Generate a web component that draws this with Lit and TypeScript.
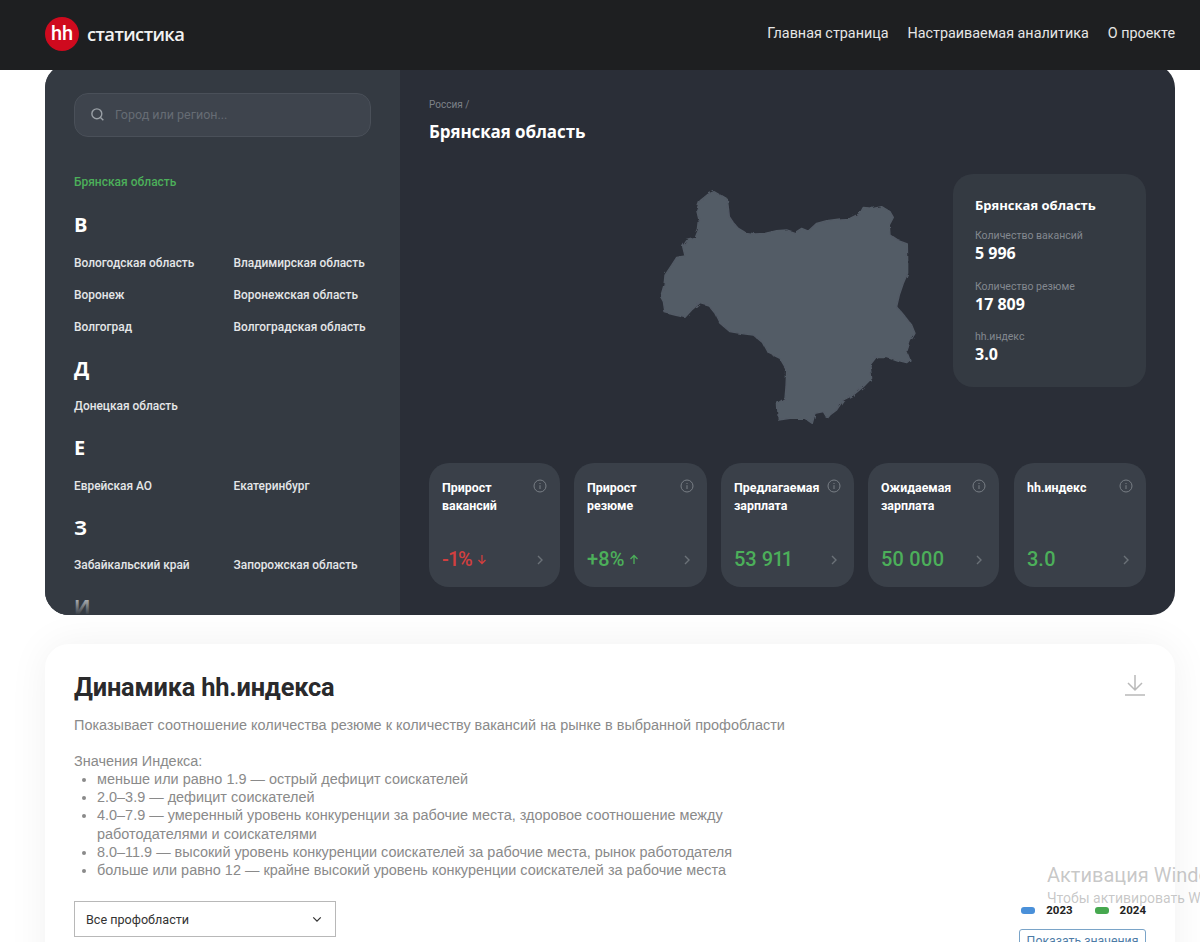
import { LitElement, html, css, svg } from "lit";
import { customElement } from "lit/decorators.js";

const MAP = "M205 72 222 65 240 75 262 88 266 120 268 140 280 158 295 175 315 187 345 192 375 190 410 182 440 180 465 188 485 175 505 183 530 160 560 152 600 147 630 145 660 130 670 112 700 115 725 110 750 125 760 142 748 165 750 195 775 212 802 222 803 270 803 310 790 340 778 375 770 410 795 440 815 465 825 490 810 515 800 545 810 570 800 578 770 570 740 560 710 560 690 585 695 625 670 650 640 675 610 690 590 720 570 735 562 745 550 725 525 730 517 760 495 745 450 745 415 750 412 700 435 685 438 650 440 600 420 565 385 548 370 520 340 495 300 490 270 485 240 460 225 430 205 405 180 398 155 420 135 442 105 435 75 428 70 395 62 380 72 345 75 315 95 285 110 262 135 258 128 230 140 212 165 205 175 180 178 155 170 120 180 92Z";

const info = svg`<svg class="info" viewBox="0 0 14 14" fill="none" stroke="currentColor" stroke-width="1"><circle cx="7" cy="7" r="6"/><path d="M7 6.200V10M7 4v1"/></svg>`;
const chev = svg`<svg class="chev" viewBox="0 0 8 12" fill="none" stroke="currentColor" stroke-width="1.400"><path d="M2 2l4 4-4 4"/></svg>`;

interface Kpi { t: string[]; v: string; c: string; arrow?: "up" | "down"; w: number }
const KPIS: Kpi[] = [
  { t: ["Прирост", "вакансий"], v: "-1%", c: "neg", arrow: "down", w: 131 },
  { t: ["Прирост", "резюме"], v: "+8%", c: "pos", arrow: "up", w: 133 },
  { t: ["Предлагаемая", "зарплата"], v: "53 911", c: "pos", w: 133 },
  { t: ["Ожидаемая", "зарплата"], v: "50 000", c: "pos", w: 131 },
  { t: ["hh.индекс"], v: "3.0", c: "pos", w: 132 },
];

@customElement("app-root")
export class AppRoot extends LitElement {
  static styles = css`
    :host { display: block; height: 942px; overflow: hidden; position: relative; background: #fff; font-family: Roboto, "Liberation Sans", sans-serif; }
    .hdr { position: relative; z-index: 2; height: 70px; background: #1e1f21; display: flex; align-items: center; padding: 0 25px 3px 45px; box-sizing: border-box; }
    .logo { width: 34px; height: 34px; border-radius: 50%; background: #cf0a1e; color: #fff; font: 500 20px/32px Roboto, sans-serif; text-align: center; }
    .brand { color: #f2f2f2; font: 600 18.400px "Open Sans", sans-serif; margin-left: 8px; letter-spacing: -0.6px; }
    nav { margin-left: auto; display: flex; gap: 19px; color: #e6e6e6; font-size: 14.350px; }
    .panel { margin: -6px 25px 0 45px; height: 551px; border-radius: 24px; overflow: hidden; display: flex; background: #2a2e37; }
    .side { width: 355px; flex: none; background: #343a42; padding: 29px 29px 0; box-sizing: border-box; position: relative; overflow: hidden; }
    .side::after { content: ""; position: absolute; left: 0; right: 0; bottom: 0; height: 26px; background: linear-gradient(rgba(52,58,66,0), #343a42); }
    .search { height: 44px; border-radius: 14px; background: #3e444d; border: 1px solid #4a5059; box-sizing: border-box; display: flex; align-items: center; padding: 0 0 1px 15px; gap: 10px; color: #666c74; font-size: 12.500px; }
    .search svg { width: 15px; height: 15px; color: #9aa0a6; }
    .cur { color: #4caf5a; font: 500 12px/16px Roboto, sans-serif; margin-top: 37px; padding-bottom: 1px; }
    .letter { color: #fff; font: 700 20px/24px "Open Sans", sans-serif; margin: 22px 0 17.500px; }
    .list { display: grid; grid-template-columns: 159.500px 1fr; row-gap: 16px; color: #e4e6e8; font: 500 11.900px/16px Roboto, sans-serif; }
    .main { flex: 1; min-width: 0; padding: 34px 29px 0; box-sizing: border-box; display: flex; flex-direction: column; }
    .crumb { color: #7d8289; font-size: 10px; line-height: 14px; }
    h1 { margin: 8px 0 0; color: #fff; font: 700 17px/24px "Open Sans", sans-serif; letter-spacing: -0.1px; }
    .mid { height: 319px; position: relative; display: flex; justify-content: flex-end; align-items: flex-start; }
    .map { position: absolute; left: 211px; top: 26px; width: 290px; height: 270px; }
    .info-card { width: 193px; height: 213px; margin-top: 30px; background: #343a42; border-radius: 20px; padding: 22px; box-sizing: border-box; color: #fff; }
    .info-card b { display: block; font: 700 13px/18px "Open Sans", sans-serif; }
    .lab { color: #83888f; font-size: 10.500px; line-height: 14px; margin-top: 16.500px; }
    .lab.first { margin-top: 15px; }
    .val { font: 700 16px/20px "Open Sans", sans-serif; }
    .kpis { display: flex; gap: 14px; }
    .kpi { height: 124px; background: #3a4049; border-radius: 20px; padding: 16px 13px; box-sizing: border-box; position: relative; }
    .kpi:last-child { margin-left: 1px; }
    .kpi .t { color: #fff; font: 700 12.400px/18px Roboto, sans-serif; }
    .info { position: absolute; right: 13px; top: 16px; width: 14px; height: 14px; color: #787e85; }
    .chev { position: absolute; right: 16px; bottom: 21px; width: 8px; height: 12px; color: #6b7178; }
    .v { position: absolute; left: 13px; bottom: 16px; font-size: 20px; line-height: 24px; font-weight: 500; display: flex; align-items: center; gap: 4px; font-feature-settings: "pnum"; font-variant-numeric: proportional-nums; }
    .v svg { width: 10px; height: 11px; }
    .neg { color: #d23f3f; }
    .pos { color: #4caf5a; }
    .wrap { padding: 29px 25px 0 45px; }
    .card { position: relative; height: 400px; background: #fff; border-radius: 24px; padding: 27px 29px; box-sizing: border-box; box-shadow: 0 0 40px rgba(0,0,0,.06); }
    h2 { margin: 0; color: #2a2a2c; font: 700 25.400px/32px Roboto, sans-serif; letter-spacing: -0.2px; }
    .dl { position: absolute; right: 29px; top: 29px; width: 22px; height: 24px; color: #b9b9b9; }
    p { margin: 13px 0 0; color: #8a8a8a; font: 14.450px/18px "Liberation Sans", Arial, sans-serif; }
    p.vals { margin-top: 18px; }
    ul { margin: 0; padding: 0 0 0 23px; color: #8a8a8a; font: 14.450px/18.200px "Liberation Sans", Arial, sans-serif; width: 650px; }
    .sel { margin-top: 22px; width: 262px; height: 36px; border: 1px solid #b8b8b8; box-sizing: border-box; display: flex; align-items: center; padding: 0 13px 0 11px; color: #333; font-size: 12.600px; justify-content: space-between; }
    .sel svg { width: 10px; height: 7px; }
    .legend { position: absolute; right: 29px; top: 259px; display: flex; align-items: center; font-size: 11.500px; font-weight: 700; color: #222; }
    .sw { width: 14px; height: 7px; border-radius: 3px; margin-right: 11px; }
    .sw.a { background: #4a90d9; }
    .sw.b { background: #46a84f; }
    .y1 { margin-right: 22px; }
    .btn { position: absolute; right: 29px; top: 285px; width: 127px; height: 30px; border: 1px solid #7aa4c8; border-radius: 3px; box-sizing: border-box; color: #4d7ba6; font-size: 12.300px; text-align: center; line-height: 22px; }
    .wm { position: absolute; left: 1047px; top: 863px; z-index: 3; white-space: nowrap; color: rgba(120,120,120,.42); pointer-events: none; }
    .wm .a { font-size: 20px; line-height: 24px; }
    .wm .b { font-size: 14px; line-height: 19px; margin-top: 2px; }
  `;

  private list(items: string[]) {
    return html`<div class="list">${items.map((i) => html`<span>${i}</span>`)}</div>`;
  }

  render() {
    return html`
      <header class="hdr">
        <div class="logo">hh</div><div class="brand">статистика</div>
        <nav><span>Главная страница</span><span>Настраиваемая аналитика</span><span>О проекте</span></nav>
      </header>
      <section class="panel">
        <aside class="side">
          <div class="search">
            <svg viewBox="0 0 16 16" fill="none" stroke="currentColor" stroke-width="1.500"><circle cx="7.300" cy="7.300" r="5.300"/><path d="M11.200 11.200l3 3"/></svg>
            Город или регион...
          </div>
          <div class="cur">Брянская область</div>
          <div class="letter">В</div>
          ${this.list(["Вологодская область", "Владимирская область", "Воронеж", "Воронежская область", "Волгоград", "Волгоградская область"])}
          <div class="letter">Д</div>
          ${this.list(["Донецкая область"])}
          <div class="letter">Е</div>
          ${this.list(["Еврейская АО", "Екатеринбург"])}
          <div class="letter">З</div>
          ${this.list(["Забайкальский край", "Запорожская область"])}
          <div class="letter">И</div>
        </aside>
        <div class="main">
          <div class="crumb">Россия /</div>
          <h1>Брянская область</h1>
          <div class="mid">
            <svg class="map" viewBox="0 0 870 810">
              <defs>
                <filter id="edge" x="-5%" y="-5%" width="110%" height="110%">
                  <feTurbulence type="fractalNoise" baseFrequency="0.045" numOctaves="2" seed="4"/>
                  <feDisplacementMap in="SourceGraphic" scale="11"/>
                </filter>
              </defs>
              <path d=${MAP} fill="#535b66" stroke="#535b66" stroke-width="4" stroke-linejoin="round" filter="url(#edge)"/>
            </svg>
            <div class="info-card">
              <b>Брянская область</b>
              <div class="lab first">Количество вакансий</div><div class="val">5 996</div>
              <div class="lab">Количество резюме</div><div class="val">17 809</div>
              <div class="lab">hh.индекс</div><div class="val">3.0</div>
            </div>
          </div>
          <div class="kpis">
            ${KPIS.map((k) => html`
              <div class="kpi" style="width:${k.w}px">
                <div class="t">${k.t[0]}${k.t[1] ? html`<br />${k.t[1]}` : ""}</div>
                ${info}
                <div class="v ${k.c}">${k.v}${k.arrow === "down"
                  ? html`<svg viewBox="0 0 10 11" fill="none" stroke="currentColor" stroke-width="1.300"><path d="M5 1v8.500M1.500 6L5 9.500 8.500 6"/></svg>`
                  : k.arrow === "up"
                  ? html`<svg viewBox="0 0 10 11" fill="none" stroke="currentColor" stroke-width="1.300"><path d="M5 10V1.500M1.500 5L5 1.500 8.500 5"/></svg>`
                  : ""}</div>
                ${chev}
              </div>`)}
          </div>
        </div>
      </section>
      <div class="wrap">
        <section class="card">
          <h2>Динамика hh.индекса</h2>
          <svg class="dl" viewBox="0 0 22 24" fill="none" stroke="currentColor" stroke-width="1.500"><path d="M11 2v14M4 10l7 7 7-7M1 22h20"/></svg>
          <p>Показывает соотношение количества резюме к количеству вакансий на рынке в выбранной профобласти</p>
          <p class="vals">Значения Индекса:</p>
          <ul>
            <li>меньше или равно 1.9 — острый дефицит соискателей</li>
            <li>2.0–3.9 — дефицит соискателей</li>
            <li>4.0–7.9 — умеренный уровень конкуренции за рабочие места, здоровое соотношение между работодателями и соискателями</li>
            <li>8.0–11.9 — высокий уровень конкуренции соискателей за рабочие места, рынок работодателя</li>
            <li>больше или равно 12 — крайне высокий уровень конкуренции соискателей за рабочие места</li>
          </ul>
          <div class="sel">Все профобласти
            <svg viewBox="0 0 12 8" fill="none" stroke="#333" stroke-width="1.500"><path d="M1.500 1.500L6 6l4.500-4.500"/></svg>
          </div>
          <div class="legend">
            <span class="sw a"></span><span class="y1">2023</span>
            <span class="sw b"></span><span>2024</span>
          </div>
          <div class="btn">Показать значения</div>
        </section>
      </div>
      <div class="wm"><div class="a">Активация Windows</div><div class="b">Чтобы активировать Windows</div></div>
    `;
  }
}
